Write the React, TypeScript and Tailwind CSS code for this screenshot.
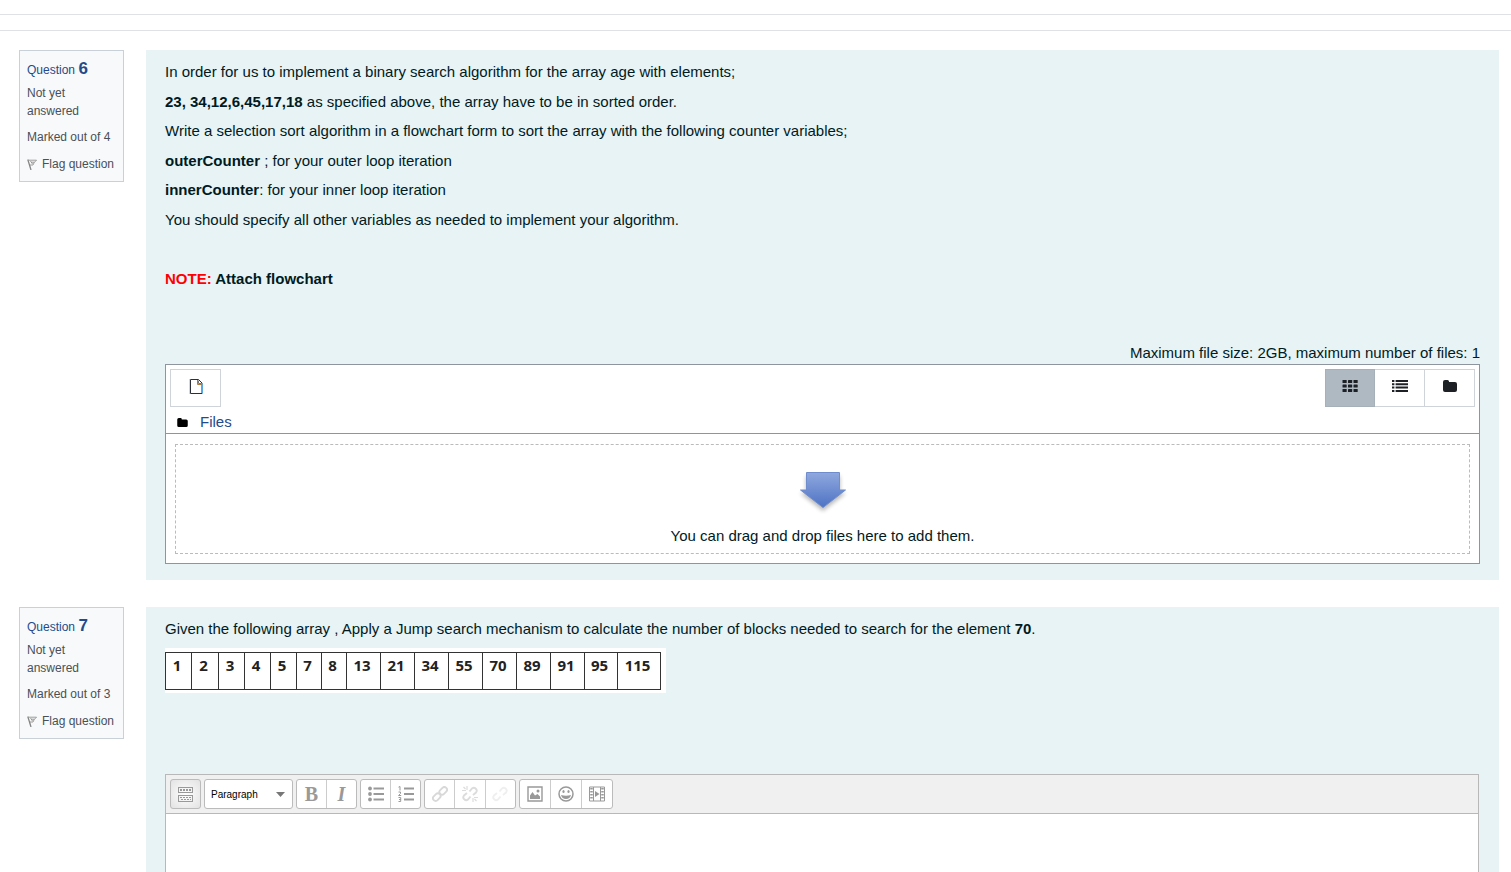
import type { ReactNode } from 'react'

const cells = [
  { value: 1, width: 'w-[26px]' },
  { value: 2, width: 'w-[27px]' },
  { value: 3, width: 'w-[26px]' },
  { value: 4, width: 'w-[26px]' },
  { value: 5, width: 'w-[26px]' },
  { value: 7, width: 'w-[25px]' },
  { value: 8, width: 'w-[25px]' },
  { value: 13, width: 'w-[34px]' },
  { value: 21, width: 'w-[34px]' },
  { value: 34, width: 'w-[34px]' },
  { value: 55, width: 'w-[34px]' },
  { value: 70, width: 'w-[34px]' },
  { value: 89, width: 'w-[34px]' },
  { value: 91, width: 'w-[34px]' },
  { value: 95, width: 'w-[33px]' },
  { value: 115, width: 'w-[43px]' },
]

function FlagIcon() {
  return (
    <svg className="w-3 h-3 shrink-0" viewBox="0 0 12 12" fill="none" stroke="#858585">
      <path d="M.8 1.500 4 12" strokeWidth="1.300" />
      <path d="M1.500 2.200h8L7.200 4.500 6 7H3M3.500 3l2 3M4.500 4.200h3" strokeWidth=".8" />
    </svg>
  )
}

function FolderIcon({ className }: { className: string }) {
  return (
    <svg className={className} viewBox="0 0 14 12" fill="currentColor">
      <path d="M0 2Q0 0 2 0h2.500Q6 0 6 1.500V2h6q2 0 2 2v6q0 2-2 2H2q-2 0-2-2z" />
    </svg>
  )
}

function QuestionInfo({ number, marks }: { number: number; marks: number }) {
  return (
    <div className="w-[105px] min-h-[132px] shrink-0 border border-[#cad0d7] bg-[#f8f9fa] pl-[7px] pt-[9px] text-xs leading-[18px] text-[#495057]">
      <h3 className="h-[18px] text-[#224b8b]">
        Question <span className="text-[17px] font-bold">{number}</span>
      </h3>
      <div className="mt-[6px] pr-6">Not yet answered</div>
      <div className="mt-2 whitespace-nowrap">Marked out of {marks}</div>
      <a href="#flag" className="mt-[9px] flex items-center gap-[3px] whitespace-nowrap">
        <FlagIcon />
        Flag question
      </a>
    </div>
  )
}

function Question({ number, marks, children }: { number: number; marks: number; children: ReactNode }) {
  return (
    <section className="flex items-start gap-[22px]">
      <QuestionInfo number={number} marks={marks} />
      <div className="flex-1 min-w-0 bg-[#e7f3f5] px-[19px] pt-[11px] pb-4 text-[15px] leading-[22px] text-[#001a1e]">
        {children}
      </div>
    </section>
  )
}

function FileManager() {
  return (
    <div className="border border-[#8f959e] bg-white">
      <div className="border-b border-[#8f959e] px-1 pt-1">
        <div className="flex justify-between">
          <button aria-label="Add file" className="flex h-[38px] w-[51px] items-center justify-center border border-[#ced4da] pb-[3px]">
            <svg className="w-[14px] h-[15px]" viewBox="0 0 14 15" fill="none">
              <path d="M.5 0v15" stroke="#fbd28f" />
              <path d="M1.500.5h8L13 4v10.500H1.500z" stroke="#2b2f3a" />
              <path d="M13.500 5v9.500" stroke="#5aa7e0" />
              <path d="M8.500 1v4.500H13" stroke="#b5793a" />
              <path d="M9.500 1.500V4.500H12.500" stroke="#777" />
            </svg>
          </button>
          <div className="flex text-[#1d2125]">
            <button aria-label="Display folder with file icons" className="flex h-[38px] w-[50px] items-center justify-center border border-[#a6b0b9] bg-[#afb9c2] pb-1">
              <svg className="w-4 h-3" viewBox="0 0 16 12" fill="currentColor">
                {[0, 4.5, 9].map((y) =>
                  [0.5, 6, 11.5].map((x) => <rect key={`${x}-${y}`} x={x} y={y} width="4.2" height="3" rx=".6" />)
                )}
              </svg>
            </button>
            <button aria-label="Display folder with file details" className="flex h-[38px] w-[49px] items-center justify-center border-y border-[#ced4da] pb-1">
              <svg className="w-4 h-3" viewBox="0 0 16 12" fill="currentColor">
                {[0, 3.3, 6.6, 9.9].map((y) => (
                  <path key={y} d={`M0 ${y}h2.400v2H0zM3.600 ${y}H16v2H3.600z`} />
                ))}
              </svg>
            </button>
            <button aria-label="Display folder as file tree" className="flex h-[38px] w-[51px] items-center justify-center border border-[#ced4da] pb-1">
              <FolderIcon className="w-[14px] h-3" />
            </button>
          </div>
        </div>
        <div className="flex items-center gap-3 pl-[7px] pt-1">
          <FolderIcon className="w-[11px] h-[9px] text-black" />
          <a href="#files" className="text-[#224b8b]">Files</a>
        </div>
      </div>
      <div className="px-[9px] pt-[10px] pb-[9px]">
        <div className="flex min-h-[110px] flex-col items-center border border-dashed border-[#bbb] pt-[25px]">
          <svg className="w-[52px] h-[44px]" viewBox="0 0 52 44">
            <defs>
              <linearGradient id="arrow" x1="0" y1="0" x2="0" y2="1">
                <stop offset="0" stopColor="#90a8de" />
                <stop offset="1" stopColor="#4d73c4" />
              </linearGradient>
              <filter id="soft" x="-20%" y="-20%" width="140%" height="150%">
                <feGaussianBlur stdDeviation="2" />
              </filter>
            </defs>
            <path d="M9 6h34v17h6L26 41 3 23h6z" fill="#000" opacity=".28" filter="url(#soft)" />
            <path d="M9.500 2.500h33v17.500h6L26 37.500 3.500 20h6z" fill="url(#arrow)" stroke="#6f8ccd" />
          </svg>
          <div className="mt-[11px]">You can drag and drop files here to add them.</div>
        </div>
      </div>
    </div>
  )
}

function ToolGroup({ width, children }: { width: string; children: ReactNode }) {
  return <div className={`${width} flex h-[30px] divide-x divide-[#ccc] rounded-[3px] border border-[#bbb] bg-white`}>{children}</div>
}

function Tool({ label, faded = false, children }: { label: string; faded?: boolean; children: ReactNode }) {
  return (
    <button aria-label={label} disabled={faded} className="flex flex-1 items-center justify-center text-[#999]">
      {children}
    </button>
  )
}

function LinkShape() {
  return (
    <g fill="none" stroke="currentColor" strokeWidth="1.900">
      <rect x="7" y="2.200" width="8.500" height="5.400" rx="2.700" transform="rotate(-45 11.200 4.900)" />
      <rect x=".5" y="8.400" width="8.500" height="5.400" rx="2.700" transform="rotate(-45 4.800 11.100)" />
    </g>
  )
}

function BrokenLinkShape() {
  return (
    <path
      d="M7.500 5.500l2.500-3q2-1.500 3.800.2t.2 3.800L11 9M8.500 10.500 6 13.500q-2 1.500-3.800-.2t-.2-3.800L5 7"
      fill="none"
      stroke="currentColor"
      strokeWidth="1.900"
    />
  )
}

function Editor() {
  return (
    <div className="mr-px border border-[#b8b8b8] bg-white">
      <div className="flex gap-[3px] border-b border-[#b8b8b8] bg-[#f0f0f0] p-1">
        <button aria-label="Toolbar toggle" className="flex h-[30px] w-[31px] items-center justify-center rounded-[3px] border border-[#bbb] bg-radial from-white to-[#e2e2e2]">
          <svg className="w-[15px] h-[15px]" viewBox="0 0 15 15" fill="none" stroke="#999" shapeRendering="crispEdges">
            <path d="M.5.5h14v5H.5zM.5 8.500h14v6H.5z" />
            <path d="M2 2.500h11M2 10.500h11M3 12.500h10" strokeDasharray="2 1" />
            <path d="M2 3.500h11" strokeDasharray="2 1" />
          </svg>
        </button>
        <div className="relative h-[30px] w-[89px]">
          <select aria-label="Format" className="h-full w-full appearance-none rounded-[3px] border border-[#bbb] bg-white pl-[6px] pt-px text-[10px] text-black">
            <option>Paragraph</option>
          </select>
          <svg className="pointer-events-none absolute right-2 top-[13px] h-[5px] w-[9px]" viewBox="0 0 9 5" fill="#777">
            <path d="M0 0h9L4.500 5z" />
          </svg>
        </div>
        <ToolGroup width="w-[61px]">
          <Tool label="Bold">
            <span className="font-['Liberation_Serif',serif] text-xl font-bold">B</span>
          </Tool>
          <Tool label="Italic">
            <span className="font-['Liberation_Serif',serif] text-xl font-bold italic">I</span>
          </Tool>
        </ToolGroup>
        <ToolGroup width="w-[61px]">
          <Tool label="Unordered list">
            <svg className="w-4 h-4" viewBox="0 0 16 16" fill="currentColor">
              <circle cx="2" cy="2.500" r="1.900" />
              <circle cx="2" cy="8" r="1.900" />
              <circle cx="2" cy="13.500" r="1.900" />
              <path d="M5.500 1.500H16v2H5.500zM5.500 7H16v2H5.500zM5.500 12.500H16v2H5.500z" />
            </svg>
          </Tool>
          <Tool label="Ordered list">
            <svg className="w-4 h-4" viewBox="0 0 16 16" fill="currentColor">
              <path d="M6 1.500h10v2H6zM6 7h10v2H6zM6 12.500h10v2H6z" />
              <path d="M.5 1.200 2 .5V4.500M.5 6h2v1.500L.5 9.500h2.700M.5 11.500h2.200v4H.5M1 13.500h1.700" fill="none" stroke="currentColor" />
            </svg>
          </Tool>
        </ToolGroup>
        <ToolGroup width="w-[92px]">
          <Tool label="Link" faded>
            <svg className="w-4 h-4 text-[#d8d8d8]" viewBox="0 0 16 16">
              <LinkShape />
            </svg>
          </Tool>
          <Tool label="Unlink" faded>
            <svg className="w-4 h-4 text-[#dcdcdc]" viewBox="0 0 16 16">
              <BrokenLinkShape />
              <path d="M5 0v4M0 4.500h4M11 16v-4M16 11.500h-4M1.500 1l2 2M14.500 15l-2-2" stroke="currentColor" strokeWidth="1.200" />
            </svg>
          </Tool>
          <Tool label="Prevent automatic link" faded>
            <svg className="w-4 h-4 text-[#efefef]" viewBox="0 0 16 16">
              <BrokenLinkShape />
            </svg>
          </Tool>
        </ToolGroup>
        <ToolGroup width="w-[94px]">
          <Tool label="Image">
            <svg className="w-4 h-4" viewBox="0 0 16 16" fill="currentColor">
              <path d="M1 1h14v14H1z" fill="none" stroke="currentColor" strokeWidth="1.400" />
              <path d="M3 13V9.500L5.500 6 8 9.500l2.500-1.500L13 10.500V13z" />
              <circle cx="11" cy="5" r="1.500" />
            </svg>
          </Tool>
          <Tool label="Emoticons">
            <svg className="w-4 h-4" viewBox="0 0 16 16" fill="currentColor">
              <circle cx="8" cy="8" r="7" fill="none" stroke="currentColor" strokeWidth="1.500" />
              <ellipse cx="5.500" cy="5.500" rx="1.100" ry="1.500" />
              <ellipse cx="10.500" cy="5.500" rx="1.100" ry="1.500" />
              <path d="M3 9q5 1.500 10 0-1 4-5 4T3 9z" />
            </svg>
          </Tool>
          <Tool label="Media">
            <svg className="w-4 h-4" viewBox="0 0 16 16" fill="currentColor">
              <path d="M.5 1h15v14H.5z" fill="none" stroke="currentColor" />
              <path d="M4.500 1v14M11.500 1v14" stroke="currentColor" />
              <path d="M2.500 2v12M13.500 2v12" stroke="currentColor" strokeWidth="2.500" strokeDasharray="1.500 1.500" />
              <path d="M6 5l4.500 3L6 11z" />
            </svg>
          </Tool>
        </ToolGroup>
      </div>
      <textarea aria-label="Answer text" className="block h-60 w-full resize-none p-3 outline-none" />
    </div>
  )
}

export default function App() {
  return (
    <div className="h-screen overflow-hidden bg-white pt-[14px] font-['Liberation_Sans',Arial,sans-serif]">
      <div className="h-[17px] border-y border-[#dee2e6]" />
      <main className="flex flex-col gap-[27px] pl-[19px] pr-3 pt-[19px]">
        <Question number={6} marks={4}>
          <div className="flex min-h-[229px] flex-col justify-between">
            <p>In order for us to implement a binary search algorithm for the array age with elements;</p>
            <p><b>23, 34,12,6,45,17,18</b> as specified above, the array have to be in sorted order.</p>
            <p>Write a selection sort algorithm in a flowchart form to sort the array with the following counter variables;</p>
            <p><b>outerCounter</b> ; for your outer loop iteration</p>
            <p><b>innerCounter</b>: for your inner loop iteration</p>
            <p>You should specify all other variables as needed to implement your algorithm.</p>
            <p>&nbsp;</p>
            <p className="font-bold"><span className="text-[#f00]">NOTE:</span> Attach flowchart</p>
          </div>
          <div className="mt-[52px] text-right">Maximum file size: 2GB, maximum number of files: 1</div>
          <FileManager />
        </Question>

        <Question number={7} marks={3}>
          <p>Given the following array , Apply a Jump search mechanism to calculate the number of blocks needed to search for the element <b>70</b>.</p>
          <div className="mt-2 w-[501px] bg-white pt-1 pb-[3px]">
            <table className="w-[496px] table-fixed border-collapse font-['Open_Sans',sans-serif] text-[15px] font-bold text-[#222]">
              <tbody>
                <tr>
                  {cells.map(({ value, width }) => (
                    <td key={value} className={`${width} h-[37px] border border-[#333] p-0 pr-[3px] pt-[2px] text-center align-top leading-[20px]`}>
                      {value}
                    </td>
                  ))}
                </tr>
              </tbody>
            </table>
          </div>
          <div className="mt-[81px]">
            <Editor />
          </div>
        </Question>
      </main>
    </div>
  )
}
